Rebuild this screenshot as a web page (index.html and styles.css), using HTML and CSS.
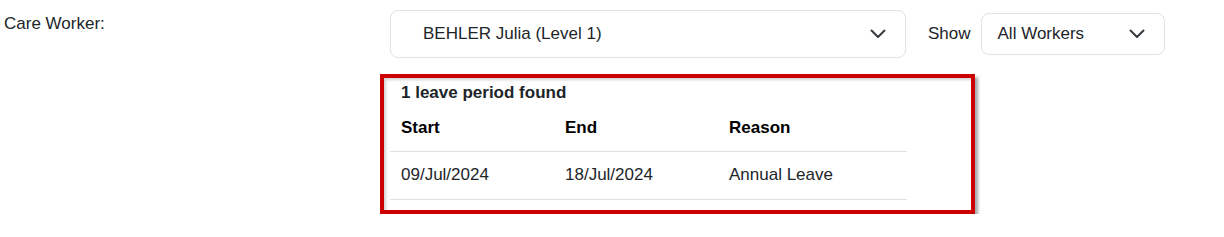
FILE: index.html
```html
<!DOCTYPE html>
<html>
<head>
<meta charset="utf-8">
<link rel="stylesheet" href="styles.css">
</head>
<body>
<div class="form-row">
  <div class="label">Care Worker:</div>
  <div class="field">
    <div class="controls">
      <div class="select select-worker">
        <span>BEHLER Julia (Level 1)</span>
        <svg class="chev" width="16" height="10" viewBox="0 0 16 10"><path d="M1.5 1.5 L8 8 L14.5 1.5" fill="none" stroke="#343a40" stroke-width="2" stroke-linecap="round" stroke-linejoin="round"/></svg>
      </div>
      <span class="show">Show</span>
      <div class="select select-show">
        <span>All Workers</span>
        <svg class="chev" width="16" height="10" viewBox="0 0 16 10"><path d="M1.5 1.5 L8 8 L14.5 1.5" fill="none" stroke="#343a40" stroke-width="2" stroke-linecap="round" stroke-linejoin="round"/></svg>
      </div>
    </div>
    <div class="panel">
      <div class="found">1 leave period found</div>
      <table class="leave">
        <thead>
          <tr><th class="c1">Start</th><th class="c2">End</th><th>Reason</th></tr>
        </thead>
        <tbody>
          <tr><td>09/Jul/2024</td><td>18/Jul/2024</td><td>Annual Leave</td></tr>
        </tbody>
      </table>
    </div>
  </div>
</div>
</body>
</html>
```

FILE: styles.css
```css
* { box-sizing: border-box; }
html, body { margin: 0; padding: 0; background: #fff; }
body {
  font-family: "Liberation Sans", Arial, sans-serif;
  font-size: 17px;
  line-height: 24px;
  color: #212529;
}
.form-row {
  display: flex;
  padding-top: 10px;
}
.label {
  width: 390px;
  padding-left: 4px;
  padding-top: 2px;
}
.field {
  display: flex;
  flex-direction: column;
}
.controls {
  display: flex;
  align-items: center;
}
.select {
  display: flex;
  align-items: center;
  justify-content: space-between;
  border: 1px solid #dee2e6;
  border-radius: 8px;
  background: #fff;
}
.select-worker {
  width: 516px;
  height: 48px;
  padding: 0 19px 0 32px;
}
.select-show {
  width: 184px;
  height: 42px;
  padding: 0 19px 0 16px;
}
.show {
  margin: 0 10px 0 22px;
}
.panel {
  margin-top: 16px;
  margin-left: -10px;
  width: 595px;
  border: 4px solid #cc0000;
  box-shadow: 3px 3px 3px rgba(0,0,0,0.35), inset 2px 2px 3px rgba(0,0,0,0.18);
  padding: 3px 64px 10px 6px;
}
.found {
  font-weight: bold;
  padding-left: 11px;
  height: 23px;
}
.leave {
  width: 517px;
  border-collapse: collapse;
}
.leave th, .leave td {
  text-align: left;
  padding: 11px 11px 12px;
  border-bottom: 1px solid #dee2e6;
}
.leave th {
  font-weight: bold;
  color: #000;
  padding-top: 12px;
  padding-bottom: 11px;
}
.leave th.c1, .leave th.c2 { width: 164px; }
```
